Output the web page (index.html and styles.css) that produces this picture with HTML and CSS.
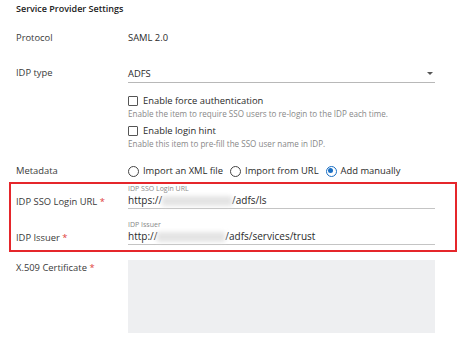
FILE: index.html
```html
<!DOCTYPE html>
<html lang="en">
<head>
  <meta charset="UTF-8">
  <title>Service Provider Settings</title>
  <link rel="stylesheet" href="styles.css">
</head>
<body>
  <div class="page">
    <h2 class="title">Service Provider Settings</h2>

    <div class="row row-protocol">
      <div class="label">Protocol</div>
      <div class="value">SAML 2.0</div>
    </div>

    <div class="row row-type">
      <div class="label">IDP type</div>
      <div class="value">
        <div class="select">
          <span>ADFS</span>
          <span class="caret"></span>
        </div>
      </div>
    </div>

    <div class="row row-check">
      <div class="label"></div>
      <div class="value">
        <label class="check"><span class="box"></span>Enable force authentication</label>
        <div class="hint">Enable the item to require SSO users to re-login to the IDP each time.</div>
        <label class="check check-2"><span class="box"></span>Enable login hint</label>
        <div class="hint">Enable this item to pre-fill the SSO user name in IDP.</div>
      </div>
    </div>

    <div class="row row-meta">
      <div class="label">Metadata</div>
      <div class="value radios">
        <label class="radio"><span class="dot"></span>Import an XML file</label>
        <label class="radio"><span class="dot"></span>Import from URL</label>
        <label class="radio"><span class="dot on"></span>Add manually</label>
      </div>
    </div>

    <div class="marked">
      <div class="row row-field">
        <div class="label">IDP SSO Login URL <span class="req">*</span></div>
        <div class="value">
          <div class="field">
            <div class="field-label">IDP SSO Login URL</div>
            <div class="field-input">https://<span class="blur"></span>/adfs/ls</div>
          </div>
        </div>
      </div>
      <div class="row row-field row-field-2">
        <div class="label">IDP Issuer <span class="req">*</span></div>
        <div class="value">
          <div class="field">
            <div class="field-label">IDP Issuer</div>
            <div class="field-input">http://<span class="blur blur-2"></span>/adfs/services/trust</div>
          </div>
        </div>
      </div>
    </div>

    <div class="row row-cert">
      <div class="label">X.509 Certificate <span class="req">*</span></div>
      <div class="value"><div class="textarea"></div></div>
    </div>
  </div>
</body>
</html>
```

FILE: styles.css
```css
body {
  font-family: "Open Sans", "Liberation Sans", sans-serif;
  margin: 0;
  padding: 0;
  background-color: #fff;
  color: #333;
}
.page {
  padding: 0 0 0 16px;
  width: 441px;
}
.title {
  margin: 0;
  font-size: 9px;
  font-weight: 600;
  line-height: 18px;
  color: #222;
}
.row {
  display: flex;
  font-size: 9.4px;
  line-height: 16px;
}
.label {
  width: 112px;
  flex: none;
  color: #3a3a3a;
}
.value {
  width: 307px;
  color: #2a2a2a;
}
.row-protocol {
  margin-top: 12px;
}
.row-type {
  margin-top: 18px;
}
.row-type .label {
  padding-top: 1px;
}
.select {
  display: flex;
  justify-content: space-between;
  align-items: center;
  padding-top: 1px;
  box-sizing: border-box;
  border-bottom: 1px solid #b8b8b8;
  height: 19px;
}
.caret {
  width: 0;
  height: 0;
  border-left: 3px solid transparent;
  border-right: 3px solid transparent;
  border-top: 3px solid #555;
  margin-right: 2px;
}
.row-check {
  margin-top: 11px;
}
.check {
  display: flex;
  align-items: center;
  line-height: 14px;
}
.check-2 {
  margin-top: 4px;
}
.box {
  width: 8px;
  height: 8px;
  border: 1px solid #555;
  border-radius: 1px;
  margin-right: 5px;
}
.hint {
  font-size: 8.1px;
  line-height: 12px;
  color: #888;
}
.row-meta {
  margin-top: 13px;
}
.radios {
  display: flex;
  gap: 7px;
}
.radio {
  display: flex;
  align-items: center;
}
.dot {
  width: 11px;
  height: 11px;
  border: 1px solid #444;
  border-radius: 50%;
  margin-right: 4px;
  box-sizing: border-box;
  position: relative;
}
.dot.on {
  border: 1.5px solid #1a6fc4;
}
.dot.on::after {
  content: "";
  position: absolute;
  left: 1.5px;
  top: 1.5px;
  width: 5px;
  height: 5px;
  border-radius: 50%;
  background-color: #1a6fc4;
}
.marked {
  margin: 3px 0 0 -7px;
  width: 448px;
  height: 70px;
  box-sizing: border-box;
  border: 2px solid #e5262b;
  padding: 0 0 0 5px;
}
.row-field .label {
  padding-top: 10px;
}
.row-field-2 {
  margin-top: 10px;
}
.req {
  color: #e0403a;
}
.field-label {
  font-size: 7px;
  line-height: 10px;
  color: #888;
}
.field-input {
  display: flex;
  align-items: center;
  font-size: 10px;
  line-height: 13px;
  padding-bottom: 1px;
  border-bottom: 1px solid #c4c4c4;
}
.blur {
  display: inline-block;
  width: 70px;
  height: 10px;
  background-color: #e4e4e4;
  filter: blur(2px);
}
.blur-2 {
  width: 68px;
}
.row-cert {
  margin-top: 8px;
}
.textarea {
  height: 73px;
  background-color: #eeeff1;
}
```
